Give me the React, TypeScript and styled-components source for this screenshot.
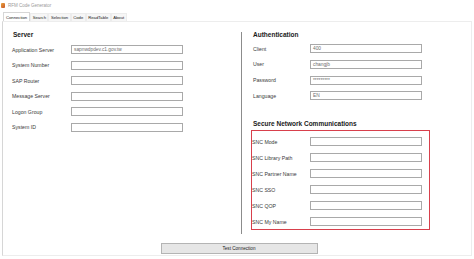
import React from "react";
import styled, { createGlobalStyle } from "styled-components";

const GlobalStyle = createGlobalStyle`
    html, body {
        margin: 0;
        padding: 0;
        background: #ffffff;
    }
    body {
        font-family: "Liberation Sans", Arial, sans-serif;
        color: #2b2b2b;
    }
`;

const Window = styled.div`
    width: 474px;
    height: 259px;
    display: flex;
    flex-direction: column;
    background: #ffffff;
    overflow: hidden;
`;

const TitleBar = styled.div`
    height: 11px;
    display: flex;
    align-items: center;
    gap: 3px;
    padding-left: 1px;
    font-size: 4.5px;
    color: #9a9a9a;
`;

const AppIcon = styled.div`
    width: 4px;
    height: 5px;
    background: linear-gradient(135deg, #e8a23c, #c9572a);
    border-radius: 1px;
`;

const TabStrip = styled.div`
    height: 10px;
    display: flex;
    align-items: flex-end;
    padding-left: 3px;
    background: #ffffff;
`;

const Tab = styled.div<{ $active?: boolean }>`
    height: ${(p) => (p.$active ? "9px" : "8px")};
    display: flex;
    align-items: center;
    padding: 0 ${(p) => (p.$active ? "2px" : "1.5px")};
    font-size: 4.2px;
    color: #222;
    background: ${(p) => (p.$active ? "#ffffff" : "#f6f6f6")};
    border: 1px solid ${(p) => (p.$active ? "#d6d6d6" : "#ececec")};
    border-bottom: none;
    box-sizing: border-box;
`;

const Page = styled.div`
    flex: 1;
    margin: 0 2px 3px 2px;
    border: 1px solid #ededed;
    border-left-color: #d6d6d6;
    display: flex;
    flex-direction: column;
`;

const Columns = styled.div`
    display: grid;
    grid-template-columns: 238px 1px 1fr;
    padding-top: 9px;
    height: 203px;
`;

const Divider = styled.div`
    width: 1px;
    background: #8c8c8c;
    margin-top: 1px;
`;

const Column = styled.div<{ $left: number }>`
    display: flex;
    flex-direction: column;
    padding-left: ${(p) => p.$left}px;
`;

const Heading = styled.div<{ $inset?: number; $top?: number }>`
    font-size: 6.5px;
    font-weight: bold;
    color: #1a1a1a;
    line-height: 8px;
    padding-left: ${(p) => p.$inset ?? 0}px;
    margin-top: ${(p) => p.$top ?? 0}px;
`;

const Form = styled.div<{ $labelWidth: number; $pitch: number; $top: number }>`
    display: grid;
    grid-template-columns: ${(p) => p.$labelWidth}px 112px;
    grid-auto-rows: 9px;
    row-gap: ${(p) => p.$pitch - 9}px;
    align-items: center;
    margin-top: ${(p) => p.$top}px;
`;

const Label = styled.div`
    font-size: 5.2px;
    color: #3a3a3a;
    white-space: nowrap;
`;

const Input = styled.div`
    height: 9px;
    box-sizing: border-box;
    border: 1px solid #a9a9a9;
    background: #ffffff;
    font-size: 4.8px;
    color: #6e6e6e;
    display: flex;
    align-items: center;
    padding-left: 2px;
    white-space: nowrap;
    overflow: hidden;
`;

const SncBox = styled.div`
    margin-top: 2px;
    margin-left: -2px;
    width: 179px;
    box-sizing: border-box;
    border: 1px solid #d8404c;
    padding: 6px 7px 3px 0;
`;

const Footer = styled.div`
    display: flex;
    justify-content: center;
    padding-top: 9px;
    padding-left: 4px;
`;

const Button = styled.button`
    width: 157px;
    height: 11px;
    padding: 0;
    border: 1px solid #b4b4b4;
    background: #e6e6e6;
    font-family: "Liberation Sans", Arial, sans-serif;
    font-size: 4.6px;
    color: #222;
`;

type Field = { label: string; value?: string };

const serverFields: Field[] = [
    { label: "Application Server", value: "sapnwdpdev.c1.gov.tw" },
    { label: "System Number" },
    { label: "SAP Router" },
    { label: "Message Server" },
    { label: "Logon Group" },
    { label: "System ID" },
];

const authFields: Field[] = [
    { label: "Client", value: "400" },
    { label: "User", value: "changjb" },
    { label: "Password", value: "*********" },
    { label: "Language", value: "EN" },
];

const sncFields: Field[] = [
    { label: "SNC Mode" },
    { label: "SNC Library Path" },
    { label: "SNC Partner Name" },
    { label: "SNC SSO" },
    { label: "SNC QOP" },
    { label: "SNC My Name" },
];

const tabs = ["Connection", "Search", "Selection", "Code", "ReadTable", "About"];

const renderFields = (fields: Field[]) =>
    fields.map((f) => (
        <React.Fragment key={f.label}>
            <Label>{f.label}</Label>
            <Input>{f.value}</Input>
        </React.Fragment>
    ));

export default function App() {
    return (
        <>
            <GlobalStyle />
            <Window>
                <TitleBar>
                    <AppIcon />
                    <span>RFM Code Generator</span>
                </TitleBar>
                <TabStrip>
                    {tabs.map((t, i) => (
                        <Tab key={t} $active={i === 0}>
                            {t}
                        </Tab>
                    ))}
                </TabStrip>
                <Page>
                    <Columns>
                        <Column $left={9}>
                            <Heading $inset={1}>Server</Heading>
                            <Form $labelWidth={59} $pitch={15.6} $top={6}>
                                {renderFields(serverFields)}
                            </Form>
                        </Column>
                        <Divider />
                        <Column $left={11}>
                            <Heading>Authentication</Heading>
                            <Form $labelWidth={57} $pitch={15.8} $top={5}>
                                {renderFields(authFields)}
                            </Form>
                            <Heading $top={20}>Secure Network Communications</Heading>
                            <SncBox>
                                <Form $labelWidth={58} $pitch={16} $top={0}>
                                    {renderFields(sncFields)}
                                </Form>
                            </SncBox>
                        </Column>
                    </Columns>
                    <Footer>
                        <Button type="button">Test Connection</Button>
                    </Footer>
                </Page>
            </Window>
        </>
    );
}
